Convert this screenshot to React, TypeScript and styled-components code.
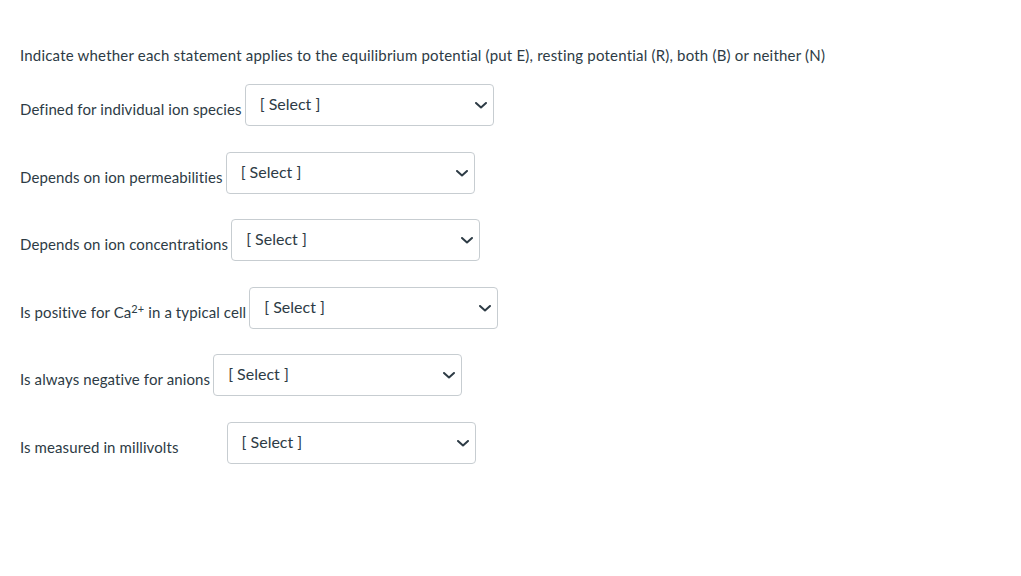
import React from 'react';
import styled, { createGlobalStyle } from 'styled-components';

const GlobalStyle = createGlobalStyle`
  body {
    margin: 0;
    background: #ffffff;
    font-family: Lato, "Noto Sans", sans-serif;
    color: #2d3b45;
  }
`;

interface Statement {
  label: React.ReactNode;
  gap?: number;
}

const statements: Statement[] = [
  { label: 'Defined for individual ion species' },
  { label: 'Depends on ion permeabilities' },
  { label: 'Depends on ion concentrations' },
  {
    label: (
      <>
        Is positive for Ca<sup>2+</sup> in a typical cell
      </>
    ),
  },
  { label: 'Is always negative for anions' },
  { label: 'Is measured in millivolts', gap: 48 },
];

const Chevron = () => (
  <svg width="12" height="7" viewBox="0 0 12 7" fill="none">
    <path
      d="M1 1l5 4.5L11 1"
      stroke="#2d3b45"
      strokeWidth="2"
      strokeLinecap="round"
      strokeLinejoin="round"
    />
  </svg>
);

const App = () => (
  <>
    <GlobalStyle />
    <StyledQuestion>
      <StyledPrompt>
        Indicate whether each statement applies to the equilibrium potential
        (put E), resting potential (R), both (B) or neither (N)
      </StyledPrompt>
      <StyledRowList>
        {statements.map((s, i) => (
          <StyledRow key={`s-${i}`}>
            <StyledLabel $gap={s.gap ?? 3}>{s.label}</StyledLabel>
            <StyledSelectWrap>
              <StyledSelect defaultValue="">
                <option value="">[ Select ]</option>
                <option value="E">E</option>
                <option value="R">R</option>
                <option value="B">B</option>
                <option value="N">N</option>
              </StyledSelect>
              <StyledChevron>
                <Chevron />
              </StyledChevron>
            </StyledSelectWrap>
          </StyledRow>
        ))}
      </StyledRowList>
    </StyledQuestion>
  </>
);

const StyledQuestion = styled.div`
  padding: 45px 20px 0 20px;
`;

const StyledPrompt = styled.p`
  margin: 0;
  font-size: 15px;
  letter-spacing: 0.2px;
  line-height: 20px;
`;

const StyledRowList = styled.div`
  display: flex;
  flex-direction: column;
  gap: 25.5px;
  margin-top: 19px;
`;

const StyledRow = styled.div`
  display: flex;
  align-items: flex-end;
  height: 42px;
`;

const StyledLabel = styled.span<{ $gap: number }>`
  font-size: 15px;
  letter-spacing: 0.1px;
  line-height: 20px;
  padding-bottom: 7px;
  margin-right: ${(p) => p.$gap}px;
  white-space: nowrap;

  sup {
    font-size: 11px;
    line-height: 0;
    vertical-align: 5px;
  }
`;

const StyledSelectWrap = styled.div`
  position: relative;
  width: 249px;
  height: 42px;
`;

const StyledSelect = styled.select`
  appearance: none;
  -webkit-appearance: none;
  box-sizing: border-box;
  width: 100%;
  height: 100%;
  margin: 0;
  padding: 0 30px 3px 14px;
  border: 1px solid #c7cdd1;
  border-radius: 4px;
  background: #ffffff;
  color: #2d3b45;
  font-family: Lato, "Noto Sans", sans-serif;
  font-size: 16px;
  outline: none;
`;

const StyledChevron = styled.span`
  position: absolute;
  right: 7px;
  top: 18px;
  display: flex;
  pointer-events: none;
`;

export default App;
